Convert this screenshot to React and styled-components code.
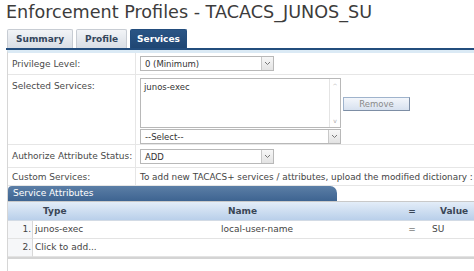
import React from "react";
import styled, { createGlobalStyle } from "styled-components";

const Global = createGlobalStyle`
  html, body {
    margin: 0;
    padding: 0;
    background: #fff;
    overflow: hidden;
  }
  body {
    font-family: "DejaVu Sans", Verdana, sans-serif;
    font-size: 9px;
    color: #444;
  }
`;

const Page = styled.div`
  width: 474px;
  height: 271px;
  padding-left: 6px;
  box-sizing: border-box;
  overflow: hidden;
`;

const Title = styled.h1`
  margin: 0;
  height: 25px;
  line-height: 24px;
  font-size: 17.6px;
  font-weight: normal;
  color: #3c3c3c;
  white-space: nowrap;
`;

const TabBar = styled.div`
  display: flex;
  gap: 3px;
  margin-top: 4px;
  padding-left: 1px;
  border-bottom: 2px solid #234d7d;
`;

const Tab = styled.div`
  height: 18px;
  line-height: 19px;
  padding: 0 ${(p) => p.$pad}px;
  font-weight: bold;
  font-size: 9px;
  border: 1px solid ${(p) => (p.$active ? "#234d7d" : "#c7ccd3")};
  border-bottom: none;
  border-radius: 2px 2px 0 0;
  color: ${(p) => (p.$active ? "#fff" : "#34465c")};
  background: ${(p) =>
    p.$active
      ? "linear-gradient(#2a5585, #1f4673)"
      : "linear-gradient(#f2f4f7, #d9dee5)"};
`;

const Panel = styled.div`
  border-left: 1px solid #d6d6d6;
  margin-left: 1px;
  border-top: 3px solid #dbeaf5;
  height: 230px;
`;

const Row = styled.div`
  display: grid;
  grid-template-columns: 128px 1fr;
  border-bottom: 1px solid #e6e6e6;
  min-height: ${(p) => p.$h}px;
`;

const Label = styled.div`
  padding: ${(p) => p.$top || 6}px 0 0 4px;
  border-right: 1px solid #e6e6e6;
  color: #4a4a4a;
  white-space: nowrap;
`;

const Value = styled.div`
  padding: ${(p) => p.$top || 3}px 0 0 4px;
  white-space: nowrap;
  overflow: hidden;
`;

const Note = styled.span`
  font-size: 8.85px;
`;

const SelectBox = styled.div`
  display: flex;
  align-items: center;
  width: ${(p) => p.$w}px;
  height: 15px;
  box-sizing: border-box;
  border: 1px solid #b8b8b8;
  background: #fff;
  font-size: 8.5px;
  color: #333;
`;

const SelectText = styled.span`
  flex: 1;
  padding-left: 4px;
`;

const Arrow = styled.span`
  width: 12px;
  height: 13px;
  box-sizing: border-box;
  border-left: 1px solid #c8c8c8;
  background: linear-gradient(#f7f7f7, #e3e3e3);
  display: flex;
  align-items: center;
  justify-content: center;
`;

const Chevron = () => (
  <svg width="7" height="5" viewBox="0 0 7 5">
    <path d="M1 1 L3.5 3.5 L6 1" stroke="#777" strokeWidth="1" fill="none" />
  </svg>
);

const Select = ({ w, children }) => (
  <SelectBox $w={w}>
    <SelectText>{children}</SelectText>
    <Arrow>
      <Chevron />
    </Arrow>
  </SelectBox>
);

const ServicesWrap = styled.div`
  display: flex;
  align-items: center;
  gap: 2px;
`;

const ServicesCol = styled.div`
  display: flex;
  flex-direction: column;
  gap: 1px;
`;

const ListBox = styled.div`
  display: flex;
  width: 201px;
  height: 50px;
  box-sizing: border-box;
  border: 1px solid #b8b8b8;
  font-size: 8.5px;
  color: #333;
`;

const ListItems = styled.div`
  flex: 1;
  padding: 3px 0 0 3px;
`;

const ScrollBar = styled.div`
  width: 10px;
  border-left: 1px solid #e4e4e4;
  display: flex;
  flex-direction: column;
  justify-content: space-between;
  align-items: center;
  padding: 3px 0;
  font-size: 6px;
  color: #aaa;
`;

const Button = styled.div`
  width: 65px;
  height: 12px;
  line-height: 12px;
  text-align: center;
  border: 1px solid #9fb3cc;
  border-right-color: #7d8ea5;
  border-bottom-color: #7d8ea5;
  background: linear-gradient(#f3f6fb, #d7e1ef);
  color: #8a8a8a;
  font-size: 8.5px;
  margin-top: -14px;
`;

const Attrs = styled.div`
  border-bottom: 2px solid #d4d4d4;
`;

const AttrHeadRow = styled.div`
  display: flex;
  border-bottom: 1px solid #c9c9c9;
`;

const AttrTitle = styled.div`
  width: 324px;
  height: 15px;
  line-height: 15px;
  padding-left: 5px;
  color: #fff;
  background: linear-gradient(#5b7ea6, #3e6491);
  border-radius: 4px 7px 0 0;
`;

const Grid = styled.div`
  display: grid;
  grid-template-columns: 25px 185px 184px 20px 1fr;
`;

const HeadCell = styled.div`
  height: 18px;
  line-height: 18px;
  font-weight: bold;
  color: #3a4656;
  background: linear-gradient(#e3edf8, #b9cfea);
  border-bottom: 1px solid #d3dbe5;
  text-align: ${(p) => p.$align || "left"};
  padding-left: ${(p) => p.$pl || 0}px;
`;

const Cell = styled.div`
  height: 17px;
  line-height: 17px;
  border-bottom: 1px solid #e3e3e3;
  color: #444;
  white-space: nowrap;
  text-align: ${(p) => p.$align || "left"};
  padding-left: ${(p) => p.$pl || 0}px;
`;

const NumCell = styled(Cell)`
  text-align: right;
  padding-right: 1px;
  border-right: 1px solid #d8d8d8;
  background: #f6f7f9;
`;

export default function App() {
  return (
    <Page>
      <Global />
      <Title>Enforcement Profiles - TACACS_JUNOS_SU</Title>
      <TabBar>
        <Tab $pad={8}>Summary</Tab>
        <Tab $pad={8}>Profile</Tab>
        <Tab $pad={6} $active>
          Services
        </Tab>
      </TabBar>
      <Panel>
        <Row $h={21}>
          <Label>Privilege Level:</Label>
          <Value>
            <Select w={134}>0 (Minimum)</Select>
          </Value>
        </Row>
        <Row $h={69}>
          <Label>Selected Services:</Label>
          <Value>
            <ServicesWrap>
              <ServicesCol>
                <ListBox>
                  <ListItems>junos-exec</ListItems>
                  <ScrollBar>
                    <span>^</span>
                    <span>v</span>
                  </ScrollBar>
                </ListBox>
                <Select w={201}>--Select--</Select>
              </ServicesCol>
              <Button>Remove</Button>
            </ServicesWrap>
          </Value>
        </Row>
        <Row $h={22}>
          <Label $top={6}>Authorize Attribute Status:</Label>
          <Value $top={4}>
            <Select w={134}>ADD</Select>
          </Value>
        </Row>
        <Row $h={17}>
          <Label $top={4}>Custom Services:</Label>
          <Value $top={4}>
            <Note>
              To add new TACACS+ services / attributes, upload the modified dictionary :
            </Note>
          </Value>
        </Row>
        <Attrs>
          <AttrHeadRow>
            <AttrTitle>Service Attributes</AttrTitle>
          </AttrHeadRow>
          <Grid>
            <HeadCell />
            <HeadCell $pl={10}>Type</HeadCell>
            <HeadCell $pl={10}>Name</HeadCell>
            <HeadCell $align="center">=</HeadCell>
            <HeadCell $pl={18}>Value</HeadCell>

            <NumCell>1.</NumCell>
            <Cell $pl={2}>junos-exec</Cell>
            <Cell $pl={3}>local-user-name</Cell>
            <Cell $align="center">=</Cell>
            <Cell $pl={10}>SU</Cell>

            <NumCell>2.</NumCell>
            <Cell $pl={2}>Click to add...</Cell>
            <Cell />
            <Cell />
            <Cell />
          </Grid>
        </Attrs>
      </Panel>
    </Page>
  );
}
